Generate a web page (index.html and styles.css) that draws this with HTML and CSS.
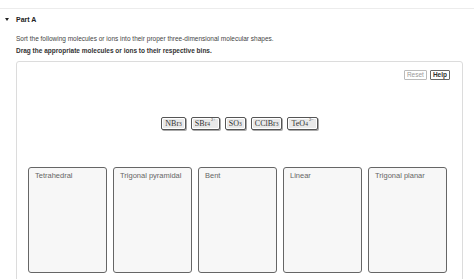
FILE: index.html
```html
<!DOCTYPE html>
<html lang="en">
<head>
    <meta charset="UTF-8">
    <title>Part A</title>
    <link rel="stylesheet" href="styles.css">
</head>
<body>
    <div class="part">
        <div class="part-header">
            <span class="caret"></span>
            <span class="part-title">Part A</span>
        </div>

        <div class="part-body">
            <p class="prompt">Sort the following molecules or ions into their proper three-dimensional molecular shapes.</p>
            <p class="prompt strong">Drag the appropriate molecules or ions to their respective bins.</p>

            <div class="board">
                <div class="toolbar">
                    <button class="tool-btn reset">Reset</button>
                    <button class="tool-btn help">Help</button>
                </div>

                <div class="tokens">
                    <span class="token">NBr<sub>3</sub></span>
                    <span class="token">SBr<sub>4</sub><sup>2+</sup></span>
                    <span class="token">SO<sub>3</sub></span>
                    <span class="token">CClBr<sub>3</sub></span>
                    <span class="token">TeO<sub>4</sub><sup>2&minus;</sup></span>
                </div>

                <div class="bins">
                    <div class="bin">Tetrahedral</div>
                    <div class="bin">Trigonal pyramidal</div>
                    <div class="bin">Bent</div>
                    <div class="bin">Linear</div>
                    <div class="bin">Trigonal planar</div>
                </div>
            </div>
        </div>
    </div>
</body>
</html>
```

FILE: styles.css
```css
* {
    box-sizing: border-box;
}

body {
    margin: 0;
    padding: 8px 0 0 0;
    height: 100vh;
    overflow: hidden;
    background: #fff;
    font-family: 'Liberation Sans', Arial, sans-serif;
    color: #333;
}

.part {
    border-top: 1px solid #ececec;
}

.part-header {
    display: flex;
    align-items: center;
    height: 20px;
}

.caret {
    width: 0;
    height: 0;
    margin-left: 5px;
    border-left: 2.5px solid transparent;
    border-right: 2.5px solid transparent;
    border-top: 3px solid #222;
}

.part-title {
    margin-left: 7px;
    font-size: 7px;
    font-weight: bold;
    color: #222;
}

.part-body {
    padding: 6px 11px 0 16px;
}

.prompt {
    margin: 0 0 4px 0;
    font-size: 6.5px;
    line-height: 8px;
    color: #444;
}

.prompt.strong {
    font-weight: bold;
    color: #333;
}

.board {
    margin-top: 6px;
    height: 240px;
    border: 1px solid #dcdcdc;
    border-radius: 3px;
}

.toolbar {
    display: flex;
    justify-content: flex-end;
    gap: 3px;
    padding: 8px 12px 0 0;
}

.tool-btn {
    height: 10px;
    padding: 0 2px;
    font-family: 'Liberation Sans', Arial, sans-serif;
    font-size: 6.5px;
    line-height: 8px;
    background: #fff;
    border-radius: 1px;
    cursor: pointer;
}

.reset {
    border: 1px solid #bbb;
    color: #999;
}

.help {
    border: 1px solid #666;
    color: #333;
    font-weight: bold;
}

.tokens {
    display: flex;
    justify-content: center;
    gap: 5px;
    margin-top: 37px;
}

.token {
    display: inline-flex;
    align-items: center;
    height: 13px;
    padding: 0 3px;
    font-family: 'Liberation Serif', 'Times New Roman', serif;
    font-size: 8px;
    line-height: 1;
    color: #333;
    background: #e9e9e9;
    border: 1px solid #555;
    border-radius: 2px;
    box-shadow: inset 0 0 0 1px #fff, 1px 1px 0 #aaa;
}

.token sub {
    font-size: 5.5px;
    line-height: 1;
    position: relative;
    top: 1.5px;
    vertical-align: baseline;
}

.token sup {
    font-size: 4.5px;
    line-height: 1;
    position: relative;
    top: -3px;
    margin-left: 1px;
    vertical-align: baseline;
}

.bins {
    display: flex;
    gap: 6px;
    padding: 0 0 0 11px;
    margin-top: 37px;
}

.bin {
    width: 79px;
    height: 106px;
    padding: 3px 6px;
    font-size: 7.5px;
    line-height: 9px;
    color: #666;
    background: #f7f7f7;
    border: 1px solid #666;
    border-radius: 3px;
}
```
